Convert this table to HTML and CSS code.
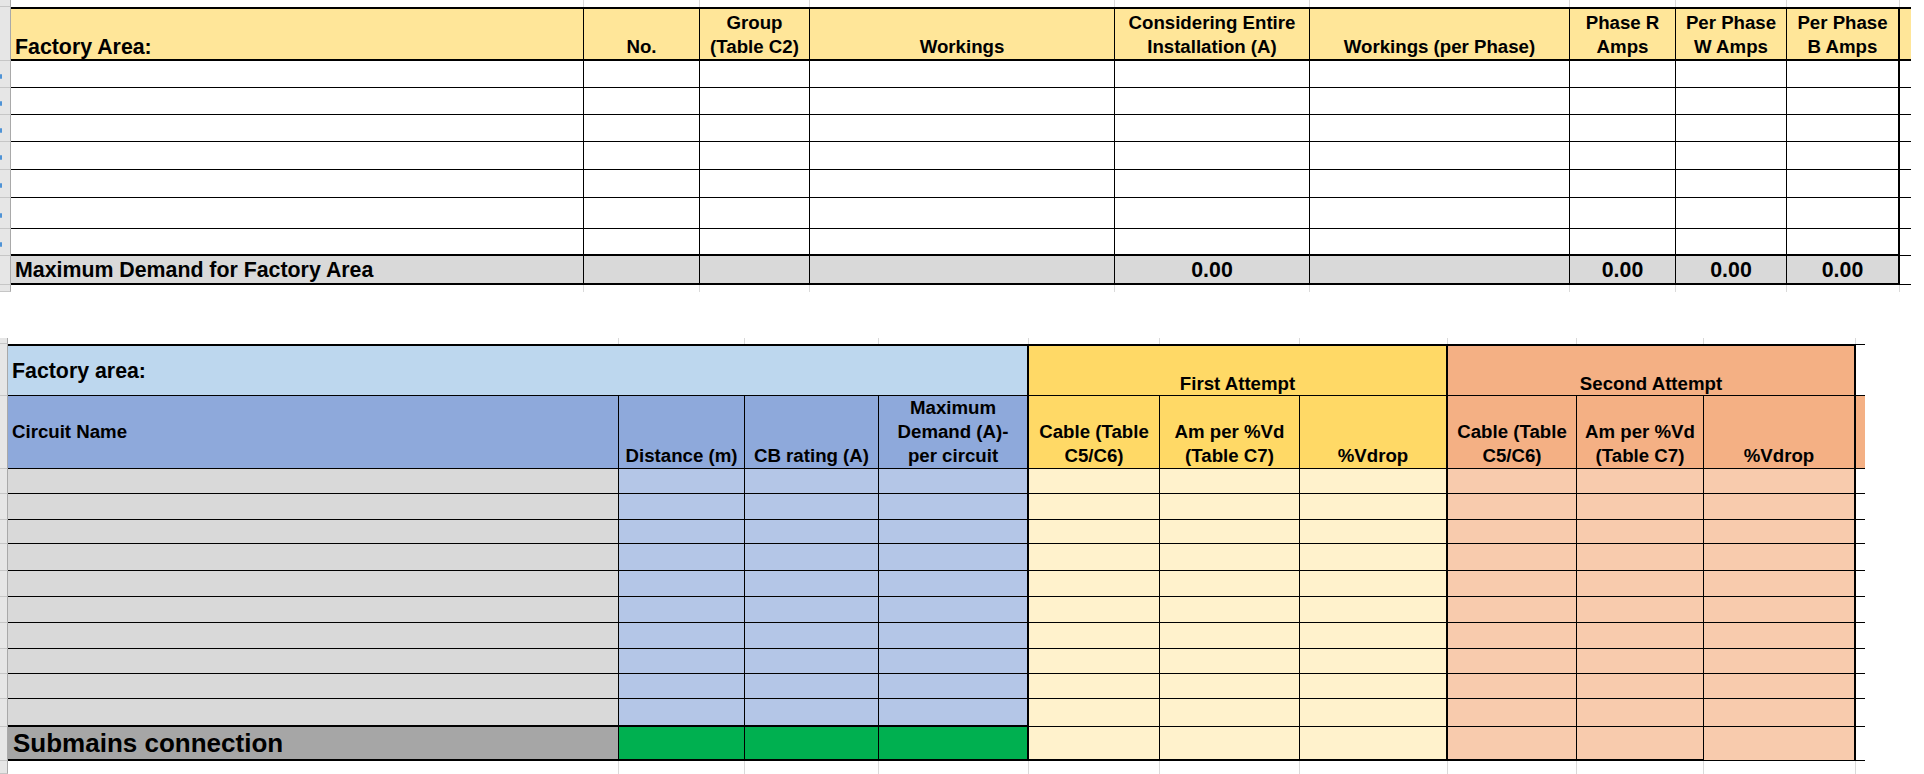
FILE: index.html
```html
<!DOCTYPE html>
<html lang="en">
<head>
<meta charset="utf-8">
<title>Factory Area Maximum Demand</title>
<link rel="stylesheet" href="styles.css">
</head>
<body>
<div class="page">

  <section class="sheet sheet-md">
    <!-- top margin row -->
    <div class="rh"></div>
    <div class="m"></div><div class="m"></div><div class="m"></div><div class="m"></div><div class="m"></div><div class="m"></div><div class="m"></div><div class="m"></div><div class="m"></div><div class="m n"></div>

    <!-- header -->
    <div class="rh"></div>
    <div class="cell hd-y tt2 tb2 h l big">Factory Area:</div>
    <div class="cell hd-y tt2 tb2 h">No.</div>
    <div class="cell hd-y tt2 tb2 h">Group<br>(Table C2)</div>
    <div class="cell hd-y tt2 tb2 h">Workings</div>
    <div class="cell hd-y tt2 tb2 h">Considering Entire<br>Installation (A)</div>
    <div class="cell hd-y tt2 tb2 h">Workings (per Phase)</div>
    <div class="cell hd-y tt2 tb2 h">Phase R<br>Amps</div>
    <div class="cell hd-y tt2 tb2 h">Per Phase<br>W Amps</div>
    <div class="cell hd-y tt2 tb2 tr2 h">Per Phase<br>B Amps</div>
    <div class="x hd-y tt2 tb2"></div>

    <!-- data rows -->
    <div class="rh rhm"><span class="rn"></span></div>
    <div class="cell"></div><div class="cell"></div><div class="cell"></div><div class="cell"></div><div class="cell"></div><div class="cell"></div><div class="cell"></div><div class="cell"></div><div class="cell tr2"></div><div class="x"></div>
    <div class="rh rhm"><span class="rn"></span></div>
    <div class="cell"></div><div class="cell"></div><div class="cell"></div><div class="cell"></div><div class="cell"></div><div class="cell"></div><div class="cell"></div><div class="cell"></div><div class="cell tr2"></div><div class="x"></div>
    <div class="rh rhm"><span class="rn"></span></div>
    <div class="cell"></div><div class="cell"></div><div class="cell"></div><div class="cell"></div><div class="cell"></div><div class="cell"></div><div class="cell"></div><div class="cell"></div><div class="cell tr2"></div><div class="x"></div>
    <div class="rh rhm"><span class="rn"></span></div>
    <div class="cell"></div><div class="cell"></div><div class="cell"></div><div class="cell"></div><div class="cell"></div><div class="cell"></div><div class="cell"></div><div class="cell"></div><div class="cell tr2"></div><div class="x"></div>
    <div class="rh rhm"><span class="rn"></span></div>
    <div class="cell"></div><div class="cell"></div><div class="cell"></div><div class="cell"></div><div class="cell"></div><div class="cell"></div><div class="cell"></div><div class="cell"></div><div class="cell tr2"></div><div class="x"></div>
    <div class="rh rhm"><span class="rn"></span></div>
    <div class="cell"></div><div class="cell"></div><div class="cell"></div><div class="cell"></div><div class="cell"></div><div class="cell"></div><div class="cell"></div><div class="cell"></div><div class="cell tr2"></div><div class="x"></div>
    <div class="rh rhm"><span class="rn"></span></div>
    <div class="cell tb2"></div><div class="cell tb2"></div><div class="cell tb2"></div><div class="cell tb2"></div><div class="cell tb2"></div><div class="cell tb2"></div><div class="cell tb2"></div><div class="cell tb2"></div><div class="cell tb2 tr2"></div><div class="x"></div>

    <!-- total row -->
    <div class="rh"></div>
    <div class="cell tot tb2 v l big">Maximum Demand for Factory Area</div>
    <div class="cell tot tb2"></div>
    <div class="cell tot tb2"></div>
    <div class="cell tot tb2"></div>
    <div class="cell tot tb2 v big">0.00</div>
    <div class="cell tot tb2"></div>
    <div class="cell tot tb2 v big">0.00</div>
    <div class="cell tot tb2 v big">0.00</div>
    <div class="cell tot tb2 tr2 v big">0.00</div>
    <div class="x"></div>

    <!-- bottom margin row -->
    <div class="rh"></div>
    <div class="m"></div><div class="m"></div><div class="m"></div><div class="m"></div><div class="m"></div><div class="m"></div><div class="m"></div><div class="m"></div><div class="m"></div><div class="m n"></div>
  </section>

  <section class="sheet sheet-vd">
    <!-- top margin row -->
    <div class="rh"></div>
    <div class="m"></div><div class="m"></div><div class="m"></div><div class="m"></div><div class="m"></div><div class="m"></div><div class="m"></div><div class="m"></div><div class="m"></div><div class="m"></div><div class="m n"></div>

    <!-- group row -->
    <div class="rh"></div>
    <div class="cell grp-blue tt2 tr2 v l big span4">Factory area:</div>
    <div class="cell grp-yel tt2 tr2 h hg span3">First Attempt</div>
    <div class="cell grp-org tt2 tr2 h hg span3">Second Attempt</div>
    <div class="x xt"></div>

    <!-- header row -->
    <div class="rh"></div>
    <div class="cell hd-b v l med">Circuit Name</div>
    <div class="cell hd-b h">Distance (m)</div>
    <div class="cell hd-b h">CB rating (A)</div>
    <div class="cell hd-b tr2 h">Maximum<br>Demand (A)-<br>per circuit</div>
    <div class="cell grp-yel h">Cable (Table<br>C5/C6)</div>
    <div class="cell grp-yel h">Am per %Vd<br>(Table C7)</div>
    <div class="cell grp-yel tr2 h">%Vdrop</div>
    <div class="cell grp-org h">Cable (Table<br>C5/C6)</div>
    <div class="cell grp-org h">Am per %Vd<br>(Table C7)</div>
    <div class="cell grp-org tr2 h">%Vdrop</div>
    <div class="x grp-org"></div>

    <!-- data rows -->
    <div class="rh"></div>
    <div class="cell d-g"></div><div class="cell d-b"></div><div class="cell d-b"></div><div class="cell d-b tr2"></div><div class="cell d-y"></div><div class="cell d-y"></div><div class="cell d-y tr2"></div><div class="cell d-o"></div><div class="cell d-o"></div><div class="cell d-o tr2"></div><div class="x"></div>
    <div class="rh"></div>
    <div class="cell d-g"></div><div class="cell d-b"></div><div class="cell d-b"></div><div class="cell d-b tr2"></div><div class="cell d-y"></div><div class="cell d-y"></div><div class="cell d-y tr2"></div><div class="cell d-o"></div><div class="cell d-o"></div><div class="cell d-o tr2"></div><div class="x"></div>
    <div class="rh"></div>
    <div class="cell d-g"></div><div class="cell d-b"></div><div class="cell d-b"></div><div class="cell d-b tr2"></div><div class="cell d-y"></div><div class="cell d-y"></div><div class="cell d-y tr2"></div><div class="cell d-o"></div><div class="cell d-o"></div><div class="cell d-o tr2"></div><div class="x"></div>
    <div class="rh"></div>
    <div class="cell d-g"></div><div class="cell d-b"></div><div class="cell d-b"></div><div class="cell d-b tr2"></div><div class="cell d-y"></div><div class="cell d-y"></div><div class="cell d-y tr2"></div><div class="cell d-o"></div><div class="cell d-o"></div><div class="cell d-o tr2"></div><div class="x"></div>
    <div class="rh"></div>
    <div class="cell d-g"></div><div class="cell d-b"></div><div class="cell d-b"></div><div class="cell d-b tr2"></div><div class="cell d-y"></div><div class="cell d-y"></div><div class="cell d-y tr2"></div><div class="cell d-o"></div><div class="cell d-o"></div><div class="cell d-o tr2"></div><div class="x"></div>
    <div class="rh"></div>
    <div class="cell d-g"></div><div class="cell d-b"></div><div class="cell d-b"></div><div class="cell d-b tr2"></div><div class="cell d-y"></div><div class="cell d-y"></div><div class="cell d-y tr2"></div><div class="cell d-o"></div><div class="cell d-o"></div><div class="cell d-o tr2"></div><div class="x"></div>
    <div class="rh"></div>
    <div class="cell d-g"></div><div class="cell d-b"></div><div class="cell d-b"></div><div class="cell d-b tr2"></div><div class="cell d-y"></div><div class="cell d-y"></div><div class="cell d-y tr2"></div><div class="cell d-o"></div><div class="cell d-o"></div><div class="cell d-o tr2"></div><div class="x"></div>
    <div class="rh"></div>
    <div class="cell d-g"></div><div class="cell d-b"></div><div class="cell d-b"></div><div class="cell d-b tr2"></div><div class="cell d-y"></div><div class="cell d-y"></div><div class="cell d-y tr2"></div><div class="cell d-o"></div><div class="cell d-o"></div><div class="cell d-o tr2"></div><div class="x"></div>
    <div class="rh"></div>
    <div class="cell d-g"></div><div class="cell d-b"></div><div class="cell d-b"></div><div class="cell d-b tr2"></div><div class="cell d-y"></div><div class="cell d-y"></div><div class="cell d-y tr2"></div><div class="cell d-o"></div><div class="cell d-o"></div><div class="cell d-o tr2"></div><div class="x"></div>
    <div class="rh"></div>
    <div class="cell d-g tb2"></div><div class="cell d-b tb2"></div><div class="cell d-b tb2"></div><div class="cell d-b tb2 tr2"></div><div class="cell d-y"></div><div class="cell d-y"></div><div class="cell d-y tr2"></div><div class="cell d-o"></div><div class="cell d-o"></div><div class="cell d-o tr2"></div><div class="x"></div>

    <!-- submains row -->
    <div class="rh"></div>
    <div class="cell sub tb2 v l huge">Submains connection</div>
    <div class="cell grn tb2"></div>
    <div class="cell grn tb2"></div>
    <div class="cell grn tb2 tr2"></div>
    <div class="cell d-y tb2"></div>
    <div class="cell d-y tb2"></div>
    <div class="cell d-y tb2 tr2"></div>
    <div class="cell d-o tb2"></div>
    <div class="cell d-o tb2"></div>
    <div class="cell d-o tr2"></div>
    <div class="x"></div>

    <!-- bottom margin row -->
    <div class="rh"></div>
    <div class="m"></div><div class="m"></div><div class="m"></div><div class="m"></div><div class="m"></div><div class="m"></div><div class="m"></div><div class="m"></div><div class="m"></div><div class="m"></div><div class="m n"></div>
  </section>

</div>
</body>
</html>
```

FILE: styles.css
```css
html, body {
  margin: 0;
  padding: 0;
  background: #ffffff;
}

body {
  width: 1924px;
  height: 774px;
  overflow: hidden;
  font-family: "Liberation Sans", Arial, sans-serif;
  color: #000000;
}

.page {
  display: flex;
  flex-direction: column;
  gap: 46px;
}

.sheet {
  display: grid;
}

.sheet > div {
  box-sizing: border-box;
  min-width: 0;
}

/* Maximum demand sheet */
.sheet-md {
  grid-template-columns: 11px 573px 116px 110px 305px 195px 260px 106px 111px 113px 11px;
  grid-template-rows: 7px 54px 27px 27px 27px 28px 28px 31px 27px 29px 7px;
}

/* Voltage drop sheet */
.sheet-vd {
  grid-template-columns: 8px 611px 126px 134px 150px 131px 140px 148px 129px 127px 152px 9px;
  grid-template-rows: 6px 52px 73px 25px 26px 24px 27px 26px 26px 26px 25px 25px 28px 34px 13px;
}

/* row header strip */
.rh {
  background: #e6e6e6;
  border-right: 1px solid #a9a9a9;
  border-bottom: 1px solid #c6c6c6;
}
.rhm {
  display: flex;
  align-items: center;
}
.rn {
  display: block;
  width: 2px;
  height: 5px;
  margin-top: 4px;
  background: #4f93d6;
  border-radius: 1px;
}

/* margin gridlines */
.m {
  border-right: 1px solid #dadada;
}
.m.n {
  border-right: none;
}

/* table cells */
.cell {
  border-right: 1px solid #000000;
  border-bottom: 1px solid #000000;
  background: #ffffff;
  font-weight: bold;
  font-size: 18.67px;
  line-height: 24px;
  white-space: nowrap;
  overflow: hidden;
}

.x {
  border-bottom: 1px solid #000000;
}
.xt {
  border-top: 1px solid #000000;
}

.tt2 { border-top: 2px solid #000000; }
.tb2 { border-bottom-width: 2px; border-bottom-style: solid; border-bottom-color: #000000; }
.tr2 { border-right-width: 2px; }

.span4 { grid-column: span 4; }
.span3 { grid-column: span 3; }

/* alignment */
.h {
  display: flex;
  align-items: flex-end;
  justify-content: center;
  text-align: center;
}
.v {
  display: flex;
  align-items: center;
  justify-content: center;
}
.l {
  justify-content: flex-start;
  text-align: left;
  padding-left: 4px;
}
.hg {
  line-height: 22px;
}

.big {
  font-size: 21.33px;
  line-height: 24px;
}
.med {
  font-size: 18.67px;
}
.huge {
  font-size: 26px;
  line-height: 30px;
  padding-left: 5px;
}

/* fills */
.hd-y { background: #ffe699; }
.tot { background: #d9d9d9; }
.grp-blue { background: #bdd7ee; }
.grp-yel { background: #ffd966; }
.grp-org { background: #f4b084; }
.hd-b { background: #8ea9db; }
.d-g { background: #d9d9d9; }
.d-b { background: #b4c6e7; }
.d-y { background: #fff2cc; }
.d-o { background: #f8cbad; }
.sub { background: #a6a6a6; }
.grn { background: #00b050; }
```
